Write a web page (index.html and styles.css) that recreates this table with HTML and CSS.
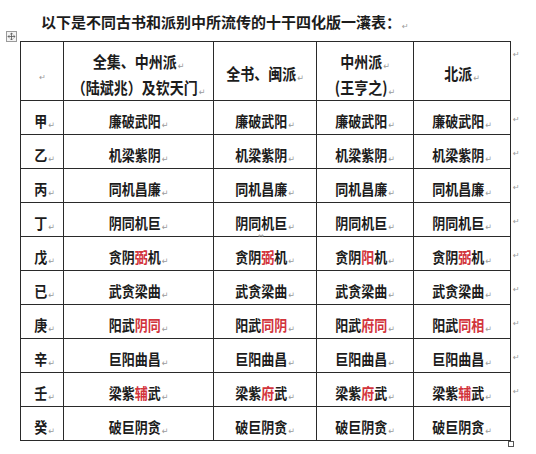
FILE: index.html
```html
<!DOCTYPE html>
<html>
<head>
<meta charset="utf-8">
<link rel="stylesheet" href="styles.css">
</head>
<body>
<div class="page">
  <div class="title">以下是不同古书和派别中所流传的十干四化版一灢表：<span class="pm">↵</span></div>
  <div class="table-wrap">
    <span class="handle"><svg width="11" height="11" viewBox="0 0 11 11"><rect x="0.5" y="0.5" width="10" height="10" fill="#f4f4f4" stroke="#9a9a9a"/><path d="M5.5 2v7M2 5.5h7M5.5 2l-1.3 1.3M5.5 2l1.3 1.3M5.5 9l-1.3-1.3M5.5 9l1.3-1.3M2 5.5l1.3-1.3M2 5.5l1.3 1.3M9 5.5l-1.3-1.3M9 5.5l-1.3 1.3" stroke="#555" stroke-width="0.8" fill="none"/></svg></span>
    <table class="grid">
      <colgroup>
        <col class="c0"><col class="c1"><col class="c2"><col class="c3"><col class="c4"><col class="ce">
      </colgroup>
      <tr class="head">
        <td><span class="pm">↵</span></td>
        <td class="two"><span class="t">全集、中州派<span class="pm">↵</span></span><br><span class="t">（陆斌兆）及钦天门<span class="pm">↵</span></span></td>
        <td><span class="t">全书、闽派<span class="pm">↵</span></span></td>
        <td class="two"><span class="t">中州派<span class="pm">↵</span></span><br><span class="t">(王亨之)<span class="pm">↵</span></span></td>
        <td><span class="t">北派<span class="pm">↵</span></span></td>
        <td class="end"><span class="pm">↵</span></td>
      </tr>
      <tr><td class="stem"><span class="t">甲<span class="pm">↵</span></span></td><td><span class="t">廉破武阳<span class="pm">↵</span></span></td><td><span class="t">廉破武阳<span class="pm">↵</span></span></td><td><span class="t">廉破武阳<span class="pm">↵</span></span></td><td><span class="t">廉破武阳<span class="pm">↵</span></span></td><td class="end"><span class="pm">↵</span></td></tr>
      <tr><td class="stem"><span class="t">乙<span class="pm">↵</span></span></td><td><span class="t">机梁紫阴<span class="pm">↵</span></span></td><td><span class="t">机梁紫阴<span class="pm">↵</span></span></td><td><span class="t">机梁紫阴<span class="pm">↵</span></span></td><td><span class="t">机梁紫阴<span class="pm">↵</span></span></td><td class="end"><span class="pm">↵</span></td></tr>
      <tr><td class="stem"><span class="t">丙<span class="pm">↵</span></span></td><td><span class="t">同机昌廉<span class="pm">↵</span></span></td><td><span class="t">同机昌廉<span class="pm">↵</span></span></td><td><span class="t">同机昌廉<span class="pm">↵</span></span></td><td><span class="t">同机昌廉<span class="pm">↵</span></span></td><td class="end"><span class="pm">↵</span></td></tr>
      <tr><td class="stem"><span class="t">丁<span class="pm">↵</span></span></td><td><span class="t">阴同机巨<span class="pm">↵</span></span></td><td class="anchor-cell"><span class="t">阴同机巨<span class="pm">↵</span></span><span class="anchor">⇔</span></td><td><span class="t">阴同机巨<span class="pm">↵</span></span></td><td><span class="t">阴同机巨<span class="pm">↵</span></span></td><td class="end"><span class="pm">↵</span></td></tr>
      <tr><td class="stem"><span class="t">戊<span class="pm">↵</span></span></td><td><span class="t">贪阴<em>弼</em>机<span class="pm">↵</span></span></td><td><span class="t">贪阴<em>弼</em>机<span class="pm">↵</span></span></td><td><span class="t">贪阴<em>阳</em>机<span class="pm">↵</span></span></td><td><span class="t">贪阴<em>弼</em>机<span class="pm">↵</span></span></td><td class="end"><span class="pm">↵</span></td></tr>
      <tr><td class="stem"><span class="t">已<span class="pm">↵</span></span></td><td><span class="t">武贪梁曲<span class="pm">↵</span></span></td><td><span class="t">武贪梁曲<span class="pm">↵</span></span></td><td><span class="t">武贪梁曲<span class="pm">↵</span></span></td><td><span class="t">武贪梁曲<span class="pm">↵</span></span></td><td class="end"><span class="pm">↵</span></td></tr>
      <tr><td class="stem"><span class="t">庚<span class="pm">↵</span></span></td><td><span class="t">阳武<em>阴同</em><span class="pm">↵</span></span></td><td><span class="t">阳武<em>同阴</em><span class="pm">↵</span></span></td><td><span class="t">阳武<em>府同</em><span class="pm">↵</span></span></td><td><span class="t">阳武<em>同相</em><span class="pm">↵</span></span></td><td class="end"><span class="pm">↵</span></td></tr>
      <tr><td class="stem"><span class="t">辛<span class="pm">↵</span></span></td><td><span class="t">巨阳曲昌<span class="pm">↵</span></span></td><td><span class="t">巨阳曲昌<span class="pm">↵</span></span></td><td><span class="t">巨阳曲昌<span class="pm">↵</span></span></td><td><span class="t">巨阳曲昌<span class="pm">↵</span></span></td><td class="end"><span class="pm">↵</span></td></tr>
      <tr><td class="stem"><span class="t">壬<span class="pm">↵</span></span></td><td><span class="t">梁紫<em>辅</em>武<span class="pm">↵</span></span></td><td><span class="t">梁紫<em>府</em>武<span class="pm">↵</span></span></td><td><span class="t">梁紫<em>府</em>武<span class="pm">↵</span></span></td><td><span class="t">梁紫<em>辅</em>武<span class="pm">↵</span></span></td><td class="end"><span class="pm">↵</span></td></tr>
      <tr><td class="stem"><span class="t">癸<span class="pm">↵</span></span></td><td><span class="t">破巨阴贪<span class="pm">↵</span></span></td><td><span class="t">破巨阴贪<span class="pm">↵</span></span></td><td><span class="t">破巨阴贪<span class="pm">↵</span></span></td><td><span class="t">破巨阴贪<span class="pm">↵</span></span></td><td class="end"></td></tr>
    </table>
    <span class="corner"></span>
  </div>
</div>
</body>
</html>
```

FILE: styles.css
```css
html, body {
  margin: 0;
  padding: 0;
  background: #ffffff;
}
body {
  font-family: "Noto Sans CJK SC", "Noto Sans", sans-serif;
  color: #1c1c1c;
}
.page {
  width: 536px;
  height: 454px;
  overflow: hidden;
}
.title {
  padding: 12px 0 0 41px;
  height: 20px;
  font-size: 15px;
  line-height: 20px;
  font-weight: 700;
}
.pm {
  font-family: "DejaVu Sans", sans-serif;
  font-size: 8px;
  line-height: 8px;
  font-weight: 400;
  color: #9a9a9a;
  margin-left: 1px;
  display: inline-block;
  transform: translateY(1px);
}
.table-wrap {
  position: relative;
  margin: 9px 0 0 20px;
}
.handle {
  position: absolute;
  left: -14px;
  top: -10px;
  line-height: 0;
}
.corner {
  position: absolute;
  left: 488px;
  top: 400px;
  width: 4px;
  height: 4px;
  border: 1px solid #555;
  background: #fff;
}
.grid {
  border-collapse: collapse;
  table-layout: fixed;
  width: 510px;
}
.c0 { width: 43px; }
.c1 { width: 150px; }
.c2 { width: 103px; }
.c3 { width: 97px; }
.c4 { width: 97px; }
.ce { width: 20px; }
.grid td {
  box-sizing: border-box;
  border: 1px solid #2a2a2a;
  padding: 6px 0 0 0;
  height: 34px;
  text-align: center;
  vertical-align: middle;
  font-size: 13px;
  font-weight: 700;
  line-height: 18px;
  white-space: nowrap;
  overflow: visible;
}
.grid .head td {
  height: 59px;
  font-size: 14px;
  line-height: 26px;
  padding: 4px 0 0 0;
}
.grid .head td.two {
  vertical-align: top;
  padding-top: 6px;
}
.t {
  display: inline-block;
  transform: scaleY(1.15);
}
.stem .t {
  margin-left: 5px;
}
.grid td.end {
  border: none;
  text-align: left;
  vertical-align: top;
  padding: 6px 0 0 2px;
}
.grid .head td.end {
  padding-top: 4px;
  line-height: 8px;
}
.end .pm {
  margin-left: 0;
}
em {
  font-style: normal;
  color: #d2343c;
}
.anchor-cell {
  position: relative;
}
.anchor {
  position: absolute;
  left: 44px;
  bottom: -4px;
  font-family: "DejaVu Sans", sans-serif;
  font-size: 7px;
  font-weight: 400;
  line-height: 8px;
  color: #8a8a8a;
}
```
